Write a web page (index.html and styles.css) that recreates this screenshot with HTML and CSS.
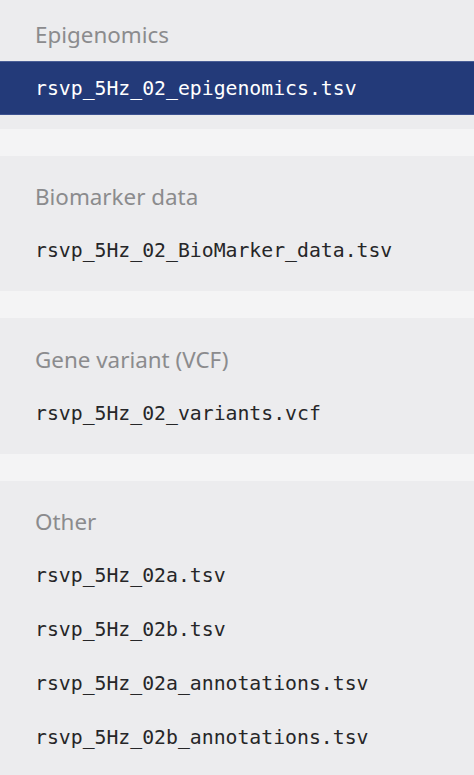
FILE: index.html
```html
<!DOCTYPE html>
<html>
<head>
<meta charset="utf-8">
<link rel="stylesheet" href="styles.css">
</head>
<body>
<div class="list">
  <section class="group group-first">
    <div class="row header">Epigenomics</div>
    <div class="row file selected">rsvp_5Hz_02_epigenomics.tsv</div>
  </section>
  <section class="group">
    <div class="row header">Biomarker data</div>
    <div class="row file">rsvp_5Hz_02_BioMarker_data.tsv</div>
  </section>
  <section class="group">
    <div class="row header">Gene variant (VCF)</div>
    <div class="row file">rsvp_5Hz_02_variants.vcf</div>
  </section>
  <section class="group">
    <div class="row header">Other</div>
    <div class="row file">rsvp_5Hz_02a.tsv</div>
    <div class="row file">rsvp_5Hz_02b.tsv</div>
    <div class="row file">rsvp_5Hz_02a_annotations.tsv</div>
    <div class="row file">rsvp_5Hz_02b_annotations.tsv</div>
  </section>
</div>
</body>
</html>
```
FILE: styles.css
```css
html, body {
  margin: 0;
  padding: 0;
  background: #f4f4f5;
  overflow: hidden;
}
.list {
  display: flex;
  flex-direction: column;
  gap: 27px;
  margin-top: -7px;
}
.group {
  background: #ececee;
  padding: 14px 0 13.5px;
  display: flex;
  flex-direction: column;
}
.row {
  height: 54px;
  display: flex;
  align-items: center;
  padding-left: 35px;
  box-sizing: border-box;
}
.header {
  font-family: "Noto Sans", "Liberation Sans", sans-serif;
  font-size: 22.4px;
  color: #8b8b8d;
}
.file {
  font-family: "DejaVu Sans Mono", "Liberation Mono", monospace;
  font-size: 19.8px;
  color: #262628;
}
.selected {
  background: #233a79;
  color: #ffffff;
  border-top: 1px solid #4a5e96;
  border-bottom: 1px solid #3d5290;
}
```
